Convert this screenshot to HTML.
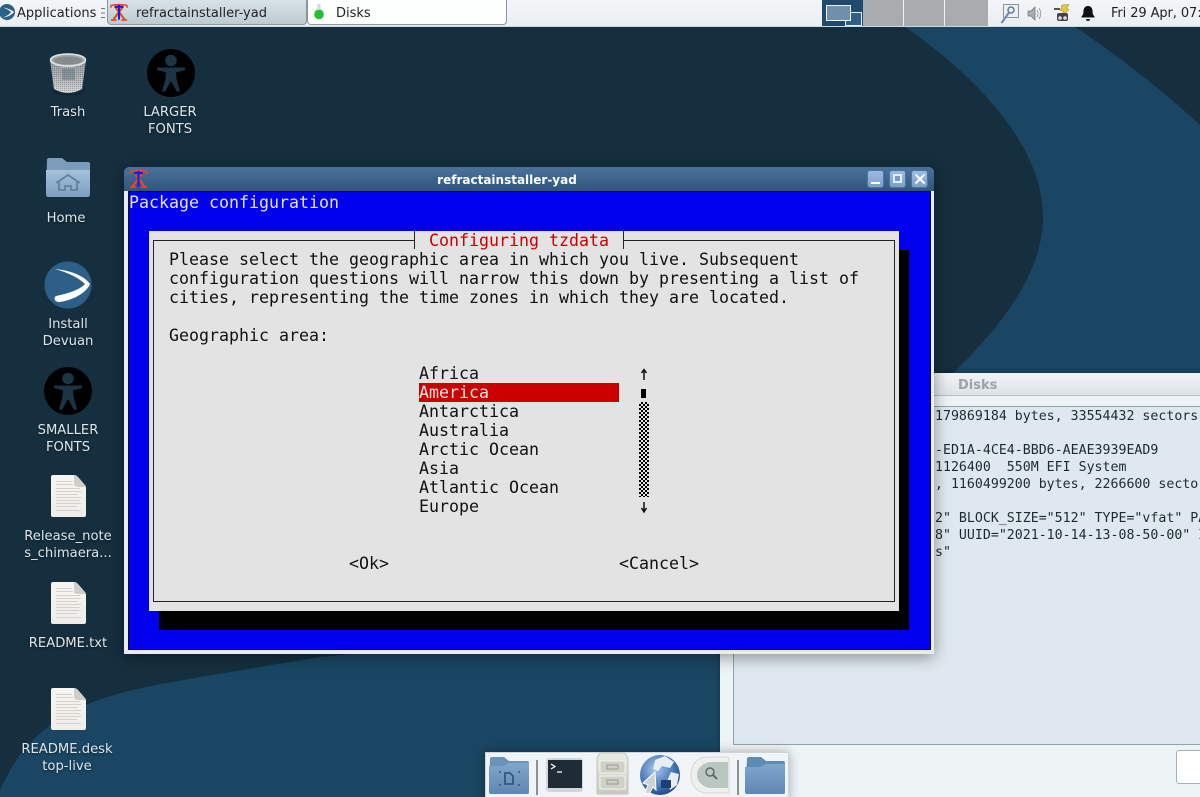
<!DOCTYPE html>
<html><head><meta charset="utf-8"><title>Desktop</title>
<style>
html,body{margin:0;padding:0;width:1200px;height:797px;overflow:hidden;background:#152f3f}
*{box-sizing:border-box}
.a{position:absolute}
#root{position:relative;width:1200px;height:797px;overflow:hidden;font-family:"DejaVu Sans","Liberation Sans",sans-serif;font-size:13px}
.lbl{position:absolute;width:100px;text-align:center;color:#dde6ea;line-height:17px;font-size:13.15px;text-shadow:0 1px 2px rgba(0,0,0,.5);white-space:pre}
.t{position:absolute;font-family:"DejaVu Sans Mono","Liberation Mono",monospace;font-size:16.61px;line-height:19px;height:19px;white-space:pre;color:#111}
.d{position:absolute;font-family:"DejaVu Sans Mono","Liberation Mono",monospace;font-size:13.25px;line-height:17px;white-space:pre;color:#1c2a33}
.wb{position:absolute;top:170px;width:17px;height:18px;border-radius:3px;background:linear-gradient(#9dbbdf,#7b9fcb);border:1px solid #4a759f}
.ws{position:absolute;top:0;height:26px;background:#a9acae}
</style></head><body><div id="root">
<svg class="a" style="left:0;top:0" width="1200" height="797" viewBox="0 0 1200 797">
<defs>
<linearGradient id="fo" x1="0" y1="0" x2="0" y2="1"><stop offset="0" stop-color="#7fa6cd"/><stop offset="1" stop-color="#5f88b0"/></linearGradient>
<linearGradient id="fh" x1="0" y1="0" x2="0" y2="1"><stop offset="0" stop-color="#a6c1d9"/><stop offset="1" stop-color="#7c9fc0"/></linearGradient>
<linearGradient id="tr" x1="0" y1="0" x2="0" y2="1"><stop offset="0" stop-color="#8d9499"/><stop offset=".5" stop-color="#a9adb0"/><stop offset="1" stop-color="#d2d3d3"/></linearGradient>
<radialGradient id="gl" cx=".4" cy=".35" r=".7"><stop offset="0" stop-color="#a8c8ea"/><stop offset=".7" stop-color="#3a6eb2"/><stop offset="1" stop-color="#1f4480"/></radialGradient>
<linearGradient id="doc" x1="0" y1="0" x2="0" y2="1"><stop offset="0" stop-color="#f7f6f3"/><stop offset="1" stop-color="#eeede9"/></linearGradient>
<linearGradient id="cab" x1="0" y1="0" x2="0" y2="1"><stop offset="0" stop-color="#ebebe6"/><stop offset="1" stop-color="#c9c9c2"/></linearGradient>
<symbol id="acc" viewBox="0 0 48 48"><circle cx="24" cy="24" r="24" fill="#000"/><circle cx="24" cy="11.5" r="5.8" fill="#1b3546"/><path d="M10 18.500h28v2.600l-9 2.200 .6 7 3.400 12.200h-3.200L24.600 33h-1.200l-5.200 9.500H15l3.400-12.200 .6-7-9-2.200z" fill="#1b3546"/></symbol>
<symbol id="docs" viewBox="0 0 36 42"><path d="M3 0h21q2 0 4 2l6 7q2 2 2 4v27q0 2-2 2H3q-2 0-2-2V2q0-2 2-2z" fill="url(#doc)"/><path d="M24 0q2 0 4 2l6 7q2 2 2 3H28q-4 0-4-4z" fill="#cfcec9"/><g stroke="#d2d1cc" stroke-width="1"><path d="M6 6.500H22M6 9.500H23M6 13.500H30M6 16.500H31M6 19.500H28M6 22.500H31M6 25.500H30M6 28.500H31M6 31.500H27M6 35.500H31"/></g></symbol>
<symbol id="tk" viewBox="0 0 19 19"><path d="M1 2.500Q9.500 1 18 2.500M1 2.500V5M18 2.500V5M1 18h6M12 18h6" stroke="#e8491f" stroke-width="1.700" fill="none"/><path d="M5 3.500L15.500 17.500M14 3.500L3.500 17.500" stroke="#e8491f" stroke-width="2.200" fill="none"/><path d="M9.500 2V17.500M5 4h9" stroke="#1c1ce0" stroke-width="2.200" fill="none"/></symbol>
<pattern id="mesh" width="2" height="2" patternUnits="userSpaceOnUse"><rect width="1" height="1" fill="#000" opacity=".18"/><rect x="1" y="1" width="1" height="1" fill="#fff" opacity=".18"/></pattern>
</defs>
<rect width="1200" height="797" fill="#152f3f"/>
<path d="M905 27C965 68 1043 140 1043 217C1043 280 990 340 935 390L700 620L320 657L200 677C120 692 40 700 0 790V797H1200V125C1160 88 1110 50 1075 27Z" fill="#1a4663"/>
<!-- trash -->
<ellipse cx="68" cy="92" rx="17" ry="3.500" fill="#0d1f2b" opacity=".5"/>
<path d="M50 60L54 89Q68 97 82 89L86 60Z" fill="url(#tr)"/>
<path d="M50 60L54 89Q68 97 82 89L86 60Z" fill="url(#mesh)"/>
<rect x="62" y="69" width="13" height="11" fill="#54707f" opacity=".45"/>
<ellipse cx="68" cy="60" rx="17.500" ry="6" fill="#a4a8aa" stroke="#e4e5e5" stroke-width="1.600"/>
<ellipse cx="68" cy="60.500" rx="14" ry="4" fill="#858a8d"/>
<use href="#acc" x="147" y="49" width="48" height="48"/>
<use href="#acc" x="44" y="367" width="48" height="48"/>
<!-- home -->
<path d="M47 160q0-2 2-2h13l5 4h21q2 0 2 2v30q0 3-3 3H49q-3 0-3-3z" fill="#7b9cba"/>
<path d="M46 170h44v24q0 3-3 3H49q-3 0-3-3z" fill="url(#fh)"/>
<path d="M56 183l12-8 12 8M59 182v8h6v-4h6v4h6v-8" fill="none" stroke="#5d83a4" stroke-width="1.800"/>
<!-- devuan -->
<circle cx="68" cy="285" r="23.500" fill="#2c6089"/>
<path d="M55 269C68 270 84 275 90 284C86 294 70 301 59 302C55 302 53 298 56 296C66 294 80 290 85 284C78 277 66 272 55 269Z" fill="#fff"/>
<use href="#docs" x="50" y="475" width="36" height="42"/>
<use href="#docs" x="50" y="582" width="36" height="42"/>
<use href="#docs" x="50" y="688" width="36" height="42"/>
</svg>

<div class="lbl" style="left:18px;top:104px">Trash</div>
<div class="lbl" style="left:120px;top:104px">LARGER
FONTS</div>
<div class="lbl" style="left:16px;top:210px">Home</div>
<div class="lbl" style="left:18px;top:316px">Install
Devuan</div>
<div class="lbl" style="left:18px;top:422px">SMALLER
FONTS</div>
<div class="lbl" style="left:18px;top:528px">Release_note
s_chimaera...</div>
<div class="lbl" style="left:18px;top:635px">README.txt</div>
<div class="lbl" style="left:17px;top:741px">README.desk
top-live</div>

<!-- Disks window -->
<div class="a" style="left:720px;top:373px;width:490px;height:430px;background:#eef3f6;box-shadow:0 0 6px rgba(0,0,0,.3)">
  <div class="a" style="left:0;top:0;width:100%;height:23px;background:linear-gradient(#f1f4f6,#dde3e6);border-bottom:1px solid #b5c0c6"></div>
  <div class="a" style="left:238px;top:3px;font-weight:bold;font-size:13px;line-height:17px;color:#9aa3a8;transform:translateY(1px)">Disks</div>
  <div class="a" style="left:13px;top:33px;width:480px;height:339px;background:#dfe8f0;border:1px solid #90a4ae"></div>
  <div class="a" style="left:456px;top:377px;width:40px;height:34px;background:#fff;border:1px solid #a5b1b8;border-radius:3px"></div>
</div>
<div class="d" style="left:935px;top:408px">179869184 bytes, 33554432 sectors</div>
<div class="d" style="left:935px;top:442px">-ED1A-4CE4-BBD6-AEAE3939EAD9</div>
<div class="d" style="left:935px;top:459px">1126400  550M EFI System</div>
<div class="d" style="left:935px;top:476px">, 1160499200 bytes, 2266600 secto</div>
<div class="d" style="left:935px;top:510px">2" BLOCK_SIZE="512" TYPE="vfat" PA</div>
<div class="d" style="left:935px;top:527px">8" UUID="2021-10-14-13-08-50-00" I</div>
<div class="d" style="left:935px;top:544px">s"</div>

<!-- Main window -->
<div class="a" style="left:124px;top:167px;width:810px;height:487px;background:#e8ecee;border-radius:6px 6px 0 0;box-shadow:0 3px 16px rgba(0,0,0,.4)">
  <div class="a" style="left:0;top:0;width:810px;height:24px;border-radius:6px 6px 0 0;background:linear-gradient(#4a729c,#2f577b)"></div>
  <div class="a" style="left:0;width:810px;top:5px;text-align:center;transform:translateX(-22px);font-weight:bold;font-size:12px;line-height:17px;color:#fff">refractainstaller-yad</div>
  <div class="a" style="left:4px;top:24px;width:803px;height:459px;background:#0000ee;border:1px solid #111"></div>
</div>
<svg class="a" style="left:129px;top:169px" width="19" height="19"><use href="#tk" width="19" height="19"/></svg>
<div class="wb" style="left:867px"><div class="a" style="left:3px;top:11px;width:9px;height:2px;background:#fff"></div></div>
<div class="wb" style="left:889px"><div class="a" style="left:3px;top:3px;width:9px;height:9px;border:2px solid #e4ecf5;background:#7a9cc6"></div></div>
<div class="wb" style="left:911px"><svg class="a" style="left:2px;top:2px" width="12" height="12"><path d="M1.500 1.500L10.500 10.500M10.500 1.500L1.500 10.500" stroke="#fff" stroke-width="2"/></svg></div>

<div class="t" style="left:129px;top:193px;color:#e5e5e5">Package configuration</div>
<!-- shadow -->
<div class="a" style="left:159px;top:250px;width:750px;height:380px;background:#000"></div>
<!-- dialog -->
<div class="a" style="left:149px;top:231px;width:750px;height:380px;background:#e3e3e3"></div>
<div class="a" style="left:153px;top:240px;width:742px;height:362px;border:1px solid #222"></div>
<div class="a" style="left:415px;top:232px;width:208px;height:17px;background:#e3e3e3"></div>
<div class="a" style="left:414px;top:231px;width:1px;height:18px;background:#222"></div>
<div class="a" style="left:623px;top:231px;width:1px;height:18px;background:#222"></div>
<div class="t" style="left:429px;top:231px;color:#cd0000">Configuring tzdata</div>
<div class="t" style="left:169px;top:250px">Please select the geographic area in which you live. Subsequent</div>
<div class="t" style="left:169px;top:269px">configuration questions will narrow this down by presenting a list of</div>
<div class="t" style="left:169px;top:288px">cities, representing the time zones in which they are located.</div>
<div class="t" style="left:169px;top:326px">Geographic area:</div>
<div class="t" style="left:419px;top:364px">Africa</div>
<div class="a" style="left:419px;top:383px;width:200px;height:19px;background:#cd0000"></div>
<div class="t" style="left:419px;top:383px;color:#e5e5e5">America</div>
<div class="t" style="left:419px;top:402px">Antarctica</div>
<div class="t" style="left:419px;top:421px">Australia</div>
<div class="t" style="left:419px;top:440px">Arctic Ocean</div>
<div class="t" style="left:419px;top:459px">Asia</div>
<div class="t" style="left:419px;top:478px">Atlantic Ocean</div>
<div class="t" style="left:419px;top:497px">Europe</div>
<svg class="a" style="left:639px;top:368px" width="10" height="146">
<path d="M5 2V12M2.500 5L5 1.500L7.500 5" fill="none" stroke="#111" stroke-width="1.500"/>
<path d="M5 134V144M2.500 140L5 144L7.500 140" fill="none" stroke="#111" stroke-width="1.500"/>
</svg>
<div class="a" style="left:641px;top:389px;width:5px;height:9px;background:#000"></div>
<div class="a" style="left:639px;top:402px;width:10px;height:95px;background:repeating-conic-gradient(#000 0 25%,#e3e3e3 0 50%) 0 0/4px 4px"></div>
<div class="t" style="left:349px;top:554px">&lt;Ok&gt;</div>
<div class="t" style="left:619px;top:554px">&lt;Cancel&gt;</div>

<!-- top panel -->
<div class="a" style="left:0;top:0;width:1200px;height:27px;background:linear-gradient(#f3f6f8,#eaeff2);border-bottom:1px solid #cfd8dc"></div>
<svg class="a" style="left:0;top:3px" width="16" height="18"><circle cx="7" cy="9" r="8" fill="#2c6089"/><path d="M3 4.500C7 5 12 7 14 9C12 12 7 14 3 14.500C7 13 10 11 11 9C9 7 6 5.500 3 4.500Z" fill="#fff"/></svg>
<div class="a" style="left:17px;top:5px;line-height:17px;color:#222;font-size:13px">Applications</div>
<svg class="a" style="left:101px;top:8px" width="5" height="11"><path d="M0 .5H4M0 5H4M0 9.500H4" stroke="#777"/></svg>
<div class="a" style="left:107px;top:0;width:200px;height:25px;border:1px solid #8b979d;border-top:0;border-radius:0 0 4px 4px;background:linear-gradient(#d8e2e7,#bccbd2)"></div>
<div class="a" style="left:307px;top:0;width:200px;height:25px;border:1px solid #8b979d;border-top:0;border-radius:0 0 4px 4px;background:#fdfefe"></div>
<svg class="a" style="left:110px;top:3px" width="18" height="18"><use href="#tk" width="18" height="18"/></svg>
<div class="a" style="left:136px;top:5px;line-height:17px;color:#222;font-size:13px">refractainstaller-yad</div>
<svg class="a" style="left:311px;top:0" width="16" height="20"><path d="M6.500 4h3v4l3 3v3a4.500 4.500 0 0 1-9 0v-3l3-3z" fill="#cfdcd8"/><circle cx="8" cy="14.500" r="4.800" fill="#22c12e"/></svg>
<div class="a" style="left:336px;top:5px;line-height:17px;color:#222;font-size:13px">Disks</div>

<!-- workspaces -->
<div class="a" style="left:822px;top:0;width:41px;height:26px;background:#1f4a6e"></div>
<div class="a" style="left:845px;top:12px;width:17px;height:14px;background:#2f5f88;border:1px solid #e8eef2"></div>
<div class="a" style="left:826px;top:5px;width:25px;height:16px;background:#6f8fad;border:1px solid #eef3f6"></div>
<div class="ws" style="left:863px;width:40px"></div>
<div class="ws" style="left:904px;width:40px"></div>
<div class="ws" style="left:945px;width:43px"></div>

<!-- tray -->
<svg class="a" style="left:1000px;top:3px" width="20" height="21"><rect x="3.500" y="1.500" width="15" height="13" fill="#eef1f3" stroke="#8a9398"/><circle cx="11" cy="7" r="3" fill="none" stroke="#5f7ea0" stroke-width="1.500"/><path d="M9 9.500L1.500 20" stroke="#6d8db2" stroke-width="2.200"/></svg>
<svg class="a" style="left:1027px;top:5px" width="15" height="17"><path d="M1 6h3l4-4v13l-4-4H1z" fill="#a5adb2" stroke="#6d7579" stroke-width=".7"/><path d="M10 5q2 3.500 0 7M12 3q3.500 5.500 0 11" fill="none" stroke="#9aa2a7" stroke-width="1"/></svg>
<svg class="a" style="left:1053px;top:4px" width="18" height="18"><path d="M1 5h6" stroke="#555" stroke-width="2"/><path d="M9 1l7-.5-2.500 4 2.500 1-7 7 1.500-5.500-3-.5z" fill="#e8c83a" stroke="#8f7a20" stroke-width=".5"/><rect x="4" y="9" width="11" height="8" rx="2" fill="#444"/><circle cx="7" cy="14" r="1.800" fill="#ddd"/><circle cx="12" cy="14" r="1.800" fill="#ddd"/></svg>
<svg class="a" style="left:1081px;top:5px" width="14" height="16"><path d="M7 1c3 0 4.500 2.500 4.500 5s.5 4 2 5.500v1H.5v-1C2 10 2.500 8.500 2.500 6S4 1 7 1z" fill="#111"/><path d="M5 14h4a2 2 0 0 1-4 0z" fill="#111"/></svg>
<div class="a" style="left:1111px;top:5px;line-height:17px;color:#222;font-size:13px;letter-spacing:-.1px;white-space:nowrap">Fri 29 Apr, 07:</div>

<!-- dock -->
<div class="a" style="left:485px;top:752px;width:304px;height:50px;background:#f1f4f6;border:1px solid #cdd4d8;box-shadow:0 0 10px rgba(0,0,0,.3)"></div>
<svg class="a" style="left:485px;top:752px" width="304" height="45">
<path d="M5 7q0-2 2-2h12l5 4h18q2 0 2 2v29q0 2-2 2H6q-2 0-2-2z" fill="#6b93ba"/><path d="M4 14h15l5-3h20v29q0 2-2 2H6q-2 0-2-2z" fill="url(#fo)"/>
<path d="M20 21h5l3 3v8h-8z" fill="none" stroke="#35587a" stroke-width="1.800"/><path d="M14 20h2M33 20h2M14 33h2M33 33h2" stroke="#35587a" stroke-width="1.500"/>
<rect x="51" y="8" width="2" height="35" fill="#8a9296"/>
<rect x="61" y="6" width="37" height="34" rx="3" fill="#d3d6d8"/><rect x="63" y="8" width="34" height="28" fill="#1f2c36"/><path d="M66 12l4 2.500-4 2.500M72 20h5" fill="none" stroke="#fff" stroke-width="1.300"/>
<path d="M115 1h25l3 5v35q0 1-1 1h-29q-1 0-1-1V6z" fill="url(#cab)" stroke="#c4c4bc"/><rect x="115" y="9" width="25" height="12" fill="#d0d1c6" stroke="#f4f4ef"/><rect x="115" y="24" width="25" height="13" fill="#d0d1c6" stroke="#f4f4ef"/><rect x="122" y="13" width="11" height="4" fill="none" stroke="#9a9b90"/><rect x="122" y="28" width="11" height="4" fill="none" stroke="#9a9b90"/>
<circle cx="175" cy="23" r="20" fill="url(#gl)"/><path d="M170 8l10-4 9 6-4 6-8-2-4 5-5-2zM186 20l8 2-2 11-7 5-3-9z" fill="#e8edf2"/><path d="M176 28h10v8h-10z" fill="#1d3f75"/>
<path d="M170 20L158 31L163 33L160 41L164 42L168 35L171 38Z" fill="#cfd2d4" stroke="#fff" stroke-width="1"/>
<path d="M222 5h20q2 0 2 2v32q0 2-2 2h-20c-10 0-16-8-16-18s6-18 16-18z" fill="#eef0ee" stroke="#d5d8d6"/><path d="M226 10h17v26h-17c-7 0-14-6-14-13s7-13 14-13z" fill="#b9c6c2"/>
<circle cx="225" cy="20" r="4" fill="none" stroke="#5f6b68" stroke-width="1.500"/><path d="M228 23l4 4" stroke="#5f6b68" stroke-width="2"/>
<rect x="252" y="8" width="2" height="35" fill="#8a9296"/>
<path d="M262 7q0-2 2-2h12l5 4h17q2 0 2 2v29q0 2-2 2h-36q-2 0-2-2z" fill="#5d8bb6"/><path d="M260 15h15l6-3h19v28q0 2-2 2h-36q-2 0-2-2z" fill="url(#fo)"/>
</svg>
</div></body></html>
